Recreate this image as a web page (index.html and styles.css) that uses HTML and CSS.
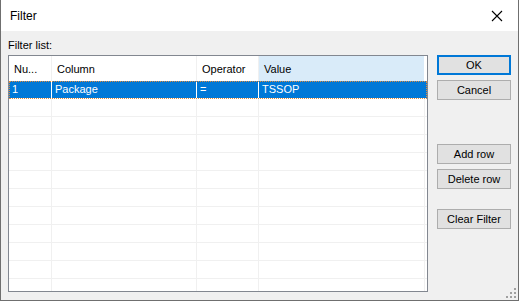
FILE: index.html
```html
<!DOCTYPE html>
<html>
<head>
<meta charset="utf-8">
<link rel="stylesheet" href="styles.css">
</head>
<body>
<div class="window">
  <div class="titlebar">
    <span class="title">Filter</span>
    <svg class="close" width="12" height="12" viewBox="0 0 12 12"><path d="M1 1 L11 11 M11 1 L1 11" stroke="#000" stroke-width="1.1" fill="none"/></svg>
  </div>
  <div class="content">
    <div class="left">
      <div class="label">Filter list:</div>
      <div class="list">
        <div class="row header">
          <div class="cell c1">Nu...</div>
          <div class="cell c2">Column</div>
          <div class="cell c3">Operator</div>
          <div class="cell c4 sorted">Value</div>
        </div>
        <div class="row selected">
          <div class="cell c1">1</div>
          <div class="cell c2">Package</div>
          <div class="cell c3">=</div>
          <div class="cell c4">TSSOP</div>
        </div>
        <div class="row"><div class="cell c1"></div><div class="cell c2"></div><div class="cell c3"></div><div class="cell c4"></div></div>
        <div class="row"><div class="cell c1"></div><div class="cell c2"></div><div class="cell c3"></div><div class="cell c4"></div></div>
        <div class="row"><div class="cell c1"></div><div class="cell c2"></div><div class="cell c3"></div><div class="cell c4"></div></div>
        <div class="row"><div class="cell c1"></div><div class="cell c2"></div><div class="cell c3"></div><div class="cell c4"></div></div>
        <div class="row"><div class="cell c1"></div><div class="cell c2"></div><div class="cell c3"></div><div class="cell c4"></div></div>
        <div class="row"><div class="cell c1"></div><div class="cell c2"></div><div class="cell c3"></div><div class="cell c4"></div></div>
        <div class="row"><div class="cell c1"></div><div class="cell c2"></div><div class="cell c3"></div><div class="cell c4"></div></div>
        <div class="row"><div class="cell c1"></div><div class="cell c2"></div><div class="cell c3"></div><div class="cell c4"></div></div>
        <div class="row"><div class="cell c1"></div><div class="cell c2"></div><div class="cell c3"></div><div class="cell c4"></div></div>
        <div class="row"><div class="cell c1"></div><div class="cell c2"></div><div class="cell c3"></div><div class="cell c4"></div></div>
        <div class="row"><div class="cell c1"></div><div class="cell c2"></div><div class="cell c3"></div><div class="cell c4"></div></div>
      </div>
    </div>
    <div class="buttons">
      <button class="btn default">OK</button>
      <button class="btn">Cancel</button>
      <div class="spacer1"></div>
      <button class="btn">Add row</button>
      <button class="btn">Delete row</button>
      <div class="spacer2"></div>
      <button class="btn">Clear Filter</button>
    </div>
  </div>
  <svg class="grip" width="12" height="12" viewBox="0 0 12 12">
    <rect x="9" y="1" width="2" height="2" fill="#a0a0a0"/>
    <rect x="5" y="5" width="2" height="2" fill="#a0a0a0"/>
    <rect x="9" y="5" width="2" height="2" fill="#a0a0a0"/>
    <rect x="1" y="9" width="2" height="2" fill="#a0a0a0"/>
    <rect x="5" y="9" width="2" height="2" fill="#a0a0a0"/>
    <rect x="9" y="9" width="2" height="2" fill="#a0a0a0"/>
  </svg>
</div>
</body>
</html>
```
FILE: styles.css
```css
* { box-sizing: border-box; }
html, body { margin: 0; padding: 0; }
body {
  width: 519px;
  height: 301px;
  overflow: hidden;
  font-family: "Liberation Sans", Arial, sans-serif;
  font-size: 11px;
  color: #000;
}
.window {
  position: relative;
  width: 519px;
  height: 301px;
  background: #f0f0f0;
  border-left: 1px solid #6f6f6f;
  border-right: 1px solid #6f6f6f;
  border-bottom: 1px solid #6f6f6f;
}
.titlebar {
  height: 31px;
  background: #fff;
  display: flex;
  align-items: center;
  justify-content: space-between;
  padding: 0 15px 0 9px;
}
.title {
  font-size: 12px;
  margin-top: 0px;
}
.close { display: block; }
.content {
  display: flex;
  padding: 7px 0 0 7px;
}
.left {
  width: 420px;
}
.label {
  height: 17px;
  line-height: 15px;
}
.list {
  width: 420px;
  height: 237px;
  border: 1px solid #828790;
  background: #fff;
  overflow: hidden;
}
.row {
  display: flex;
  height: 18px;
  border-bottom: 1px solid #f0f0f0;
}
.row.header {
  height: 25px;
  border-bottom: none;
}
.cell {
  border-right: 1px solid #f0f0f0;
  padding-left: 4px;
  line-height: 17px;
  white-space: nowrap;
  overflow: hidden;
}
.header .cell {
  line-height: 26px;
  padding-left: 5px;
}
.c1 { width: 43px; }
.c2 { width: 145px; }
.c3 { width: 62px; }
.c4 { width: 166px; }
.header .sorted {
  background: #d9ebf9;
  border-right: 1px solid #fff;
}
.row.selected {
  background: #0078d7;
  color: #fff;
  outline: 1px dotted #e08a3c;
  outline-offset: -1px;
  border-bottom: 1px solid #fff;
}
.selected .cell {
  border-right: 1px solid #fff;
  padding-left: 3px;
}
.selected .c4 { border-right: none; }
.buttons {
  display: flex;
  flex-direction: column;
  margin-left: 9px;
  padding-top: 17px;
}
.btn {
  width: 74px;
  height: 20px;
  background: #e1e1e1;
  border: 1px solid #adadad;
  font-family: "Liberation Sans", Arial, sans-serif;
  font-size: 11px;
  color: #000;
  padding: 0;
  margin: 0 0 5px 0;
}
.btn.default {
  border: 2px solid #0078d7;
}
.spacer1 { height: 39px; }
.spacer2 { height: 15px; }
.grip {
  position: absolute;
  right: 1px;
  bottom: 1px;
}
```
